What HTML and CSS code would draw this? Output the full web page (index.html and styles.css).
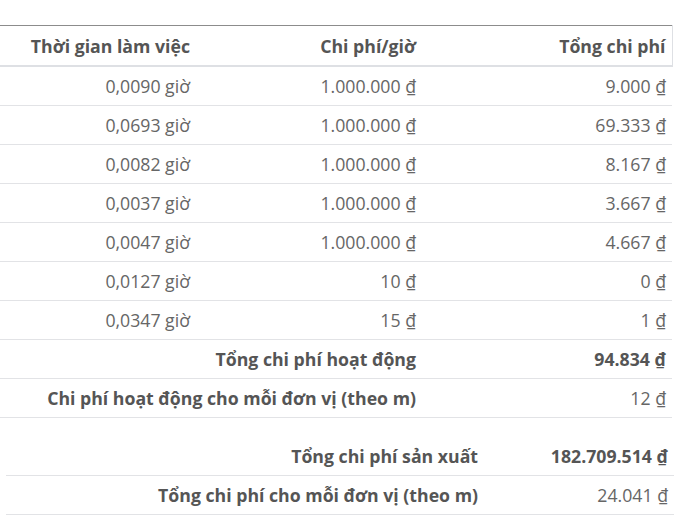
FILE: index.html
```html
<!DOCTYPE html>
<html lang="vi">
<head>
<meta charset="utf-8">
<link rel="stylesheet" href="styles.css">
</head>
<body>
<table class="cost">
  <colgroup><col class="c1"><col class="c2"><col class="c3"></colgroup>
  <thead>
    <tr><th>Thời gian làm việc</th><th>Chi phí/giờ</th><th>Tổng chi phí</th></tr>
  </thead>
  <tbody>
    <tr><td>0,0090 giờ</td><td>1.000.000 ₫</td><td>9.000 ₫</td></tr>
    <tr><td>0,0693 giờ</td><td>1.000.000 ₫</td><td>69.333 ₫</td></tr>
    <tr><td>0,0082 giờ</td><td>1.000.000 ₫</td><td>8.167 ₫</td></tr>
    <tr><td>0,0037 giờ</td><td>1.000.000 ₫</td><td>3.667 ₫</td></tr>
    <tr><td>0,0047 giờ</td><td>1.000.000 ₫</td><td>4.667 ₫</td></tr>
    <tr><td>0,0127 giờ</td><td>10 ₫</td><td>0 ₫</td></tr>
    <tr><td>0,0347 giờ</td><td>15 ₫</td><td>1 ₫</td></tr>
    <tr class="sum"><th colspan="2">Tổng chi phí hoạt động</th><th>94.834 ₫</th></tr>
    <tr class="sum"><th colspan="2">Chi phí hoạt động cho mỗi đơn vị (theo m)</th><td>12 ₫</td></tr>
  </tbody>
</table>
<table class="total">
  <colgroup><col class="t1"><col class="t2"></colgroup>
  <tbody>
    <tr class="first"><th>Tổng chi phí sản xuất</th><th>182.709.514 ₫</th></tr>
    <tr><th>Tổng chi phí cho mỗi đơn vị (theo m)</th><td>24.041 ₫</td></tr>
  </tbody>
</table>
</body>
</html>
```
FILE: styles.css
```css
html, body {
  margin: 0;
  padding: 0;
  background: #fff;
}
body {
  font-family: "Open Sans", "DejaVu Sans", sans-serif;
  font-size: 17.7px;
  color: #666;
}
table {
  border-collapse: collapse;
  table-layout: fixed;
}
.cost {
  width: 672px;
  margin-top: 25px;
}
.c1 { width: 196px; }
.c2 { width: 226px; }
.c3 { width: 250px; }
th, td {
  text-align: right;
  padding: 0 6px 0 0;
  height: 38px;
  border-bottom: 1px solid #e2e3e6;
  white-space: nowrap;
}
th {
  font-weight: 700;
  color: #555;
}
.cost thead th {
  border-top: 1px solid #8c8c8c;
  border-bottom: 2px solid #dee0e4;
  height: 39px;
}
.cost thead th:last-child {
  border-right: 1px solid #dee0e4;
}
.total {
  width: 668px;
  margin: 19px 0 0 6px;
}
.t1 { width: 478px; }
.t2 { width: 190px; }
.total tr.first th {
  border-bottom: 1px solid #e2e3e6;
}
```
